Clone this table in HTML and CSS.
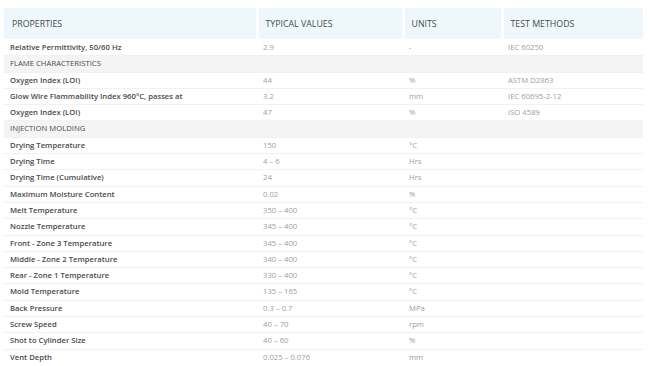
FILE: index.html
```html
<!DOCTYPE html>
<html>
<head>
<meta charset="utf-8">
<link rel="stylesheet" href="styles.css">
</head>
<body>
<div class="wrap">
<table class="props">
  <colgroup>
    <col class="c1"><col class="c2"><col class="c3"><col class="c4">
  </colgroup>
  <thead>
    <tr><th>PROPERTIES</th><th>TYPICAL VALUES</th><th>UNITS</th><th>TEST METHODS</th></tr>
  </thead>
  <tbody>
    <tr><td>Relative Permittivity, 50/60 Hz</td><td>2.9</td><td>-</td><td>IEC 60250</td></tr>
    <tr class="sec"><td colspan="4">FLAME CHARACTERISTICS</td></tr>
    <tr><td>Oxygen Index (LOI)</td><td>44</td><td>%</td><td>ASTM D2863</td></tr>
    <tr><td>Glow Wire Flammability Index 960°C, passes at</td><td>3.2</td><td>mm</td><td>IEC 60695-2-12</td></tr>
    <tr><td>Oxygen Index (LOI)</td><td>47</td><td>%</td><td>ISO 4589</td></tr>
    <tr class="sec"><td colspan="4">INJECTION MOLDING</td></tr>
    <tr><td>Drying Temperature</td><td>150</td><td>°C</td><td></td></tr>
    <tr><td>Drying Time</td><td>4 – 6</td><td>Hrs</td><td></td></tr>
    <tr><td>Drying Time (Cumulative)</td><td>24</td><td>Hrs</td><td></td></tr>
    <tr><td>Maximum Moisture Content</td><td>0.02</td><td>%</td><td></td></tr>
    <tr><td>Melt Temperature</td><td>350 – 400</td><td>°C</td><td></td></tr>
    <tr><td>Nozzle Temperature</td><td>345 – 400</td><td>°C</td><td></td></tr>
    <tr><td>Front - Zone 3 Temperature</td><td>345 – 400</td><td>°C</td><td></td></tr>
    <tr><td>Middle - Zone 2 Temperature</td><td>340 – 400</td><td>°C</td><td></td></tr>
    <tr><td>Rear - Zone 1 Temperature</td><td>330 – 400</td><td>°C</td><td></td></tr>
    <tr><td>Mold Temperature</td><td>135 – 165</td><td>°C</td><td></td></tr>
    <tr><td>Back Pressure</td><td>0.3 – 0.7</td><td>MPa</td><td></td></tr>
    <tr><td>Screw Speed</td><td>40 – 70</td><td>rpm</td><td></td></tr>
    <tr><td>Shot to Cylinder Size</td><td>40 – 60</td><td>%</td><td></td></tr>
    <tr><td>Vent Depth</td><td>0.025 – 0.076</td><td>mm</td><td></td></tr>
  </tbody>
</table>
</div>
</body>
</html>
```
FILE: styles.css
```css
html, body {
  margin: 0;
  padding: 0;
  background: #ffffff;
}
.wrap {
  padding: 8px 7px 0 4px;
  font-family: "Open Sans", "Noto Sans", sans-serif;
}
.props {
  width: 639px;
  table-layout: fixed;
  border-collapse: collapse;
}
.c1 { width: 253px; }
.c2 { width: 146px; }
.c3 { width: 99px; }
.c4 { width: 141px; }
.props th {
  height: 31px;
  padding: 0 0 0 8px;
  background: #eef7fc;
  color: #4a4a4a;
  font-size: 8.8px;
  font-weight: 400;
  text-align: left;
  border-left: 3px solid #ffffff;
  border-bottom: 1px solid #ffffff;
}
.props th:first-child {
  border-left: 0;
}
.props th:not(:first-child) {
  padding-left: 7px;
}
.props td {
  padding: 0 0 0 6px;
  line-height: 15.3px;
  height: 15.3px;
  font-size: 7.7px;
  color: #a0a0a0;
  border-top: 1px solid #f1f1f1;
  white-space: nowrap;
}
.props td:first-child {
  color: #4a4a4a;
  font-weight: 600;
}
.props tr.sec td {
  background: #f4f4f4;
  color: #4a4a4a;
  font-weight: 400;
}
```
